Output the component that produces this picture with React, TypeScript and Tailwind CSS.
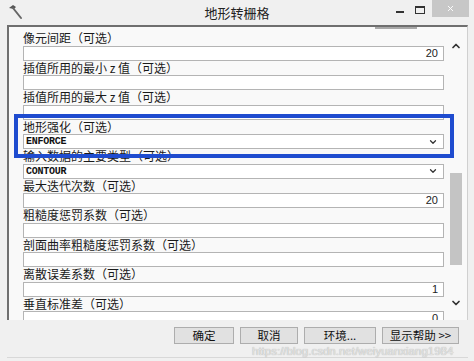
import { ChevronDown, ChevronUp, X } from 'lucide-react';

const rows: { label: string; kind: 'input' | 'select'; value?: string }[] = [
    { label: '像元间距（可选）', kind: 'input', value: '20' },
    { label: '插值所用的最小 z 值（可选）', kind: 'input' },
    { label: '插值所用的最大 z 值（可选）', kind: 'input' },
    { label: '地形强化（可选）', kind: 'select', value: 'ENFORCE' },
    { label: '输入数据的主要类型（可选）', kind: 'select', value: 'CONTOUR' },
    { label: '最大迭代次数（可选）', kind: 'input', value: '20' },
    { label: '粗糙度惩罚系数（可选）', kind: 'input' },
    { label: '剖面曲率粗糙度惩罚系数（可选）', kind: 'input' },
    { label: '离散误差系数（可选）', kind: 'input', value: '1' },
    { label: '垂直标准差（可选）', kind: 'input', value: '0' },
];

function Hammer() {
    return (
        <svg width="16" height="16" viewBox="0 0 16 16">
            <path d="M2 4 L6 1 L9 3 L7 5 Z" fill="#555" />
            <path d="M6 4 L14 14" stroke="#666" strokeWidth="2" strokeLinecap="round" />
        </svg>
    );
}

function Field({ label, kind, value }: { label: string; kind: 'input' | 'select'; value?: string }) {
    return (
        <div className="flex flex-col">
            <div className="h-[14.5px] text-[12px] leading-[14.5px] text-[#1a1a1a] whitespace-nowrap">{label}</div>
            {kind === 'input' ? (
                <div className="h-[15px] border border-[#b4b4b4] bg-white flex items-center justify-end pr-[5px] text-[11px] text-[#222] font-['Liberation_Sans',sans-serif]">
                    {value}
                </div>
            ) : (
                <div className="h-[15px] border border-[#b4b4b4] bg-white flex items-center justify-between pl-[2px] pr-[5px]">
                    <span className="text-[10px] font-bold tracking-tight text-[#111] font-['Liberation_Mono',monospace]">{value}</span>
                    <ChevronDown size={10} strokeWidth={3} className="text-[#333]" />
                </div>
            )}
        </div>
    );
}

function Btn({ children }: { children: React.ReactNode }) {
    return (
        <div className="h-[17px] border border-[#adadad] bg-[#e1e1e1] flex items-center justify-center text-[11.5px] text-[#111]">
            {children}
        </div>
    );
}

export default function App() {
    return (
        <div className="relative w-[474px] h-[361px] overflow-hidden bg-[#f0f0f0] font-['Noto_Sans_CJK_SC',sans-serif]">
            {/* title bar */}
            <div className="relative h-[25px] flex items-start">
                <div className="pl-[7px] pt-[4px]">
                    <Hammer />
                </div>
                <div className="absolute left-0 right-0 top-[3px] text-center text-[13px] text-[#222]">地形转栅格</div>
                <div className="ml-auto flex items-start mr-[5px]">
                    <div className="w-[8px] h-[2px] bg-[#333] mt-[11px] mr-[11px]" />
                    <div className="w-[10px] h-[8px] border border-[#333] border-t-2 mt-[6px] mr-[7px]" />
                    <div className="w-[37px] h-[17px] bg-[#c7c7c7] flex items-center justify-center">
                        <X size={9} strokeWidth={2.5} className="text-white" />
                    </div>
                </div>
            </div>

            {/* content panel */}
            <div className="relative ml-[7px] mr-[6px] h-[295px] border-l-2 border-t-2 border-r border-[#6f6f6f] border-r-[#d0d0d0] bg-[#f9f9f9] overflow-hidden flex">
                <div className="absolute left-[366px] top-0 w-[42px] h-[2px] bg-[#a8a8a8]" />
                <div className="pl-[14px] pt-[4px] w-[435px] flex flex-col">
                    {rows.map((r) => (
                        <Field key={r.label} {...r} />
                    ))}
                </div>
                <div className="relative flex-1 flex flex-col items-center">
                    <ChevronUp size={12} strokeWidth={3.5} className="text-[#333] mt-[13px]" />
                    <div className="mt-[121px] w-[12px] h-[92px] bg-[#c4c4c4]" />
                    <ChevronDown size={12} strokeWidth={3.5} className="text-[#333] mt-[32px]" />
                </div>
            </div>

            {/* buttons */}
            <div className="flex gap-[6px] pl-[174px] pt-[7px]">
                <div className="w-[60px]"><Btn>确定</Btn></div>
                <div className="w-[58px]"><Btn>取消</Btn></div>
                <div className="w-[72px]"><Btn>环境...</Btn></div>
                <div className="w-[77px]"><Btn>显示帮助 &gt;&gt;</Btn></div>
            </div>
            <div className="absolute left-[7px] right-[6px] bottom-[3px] h-px bg-[#d8d8d8]" />

            {/* highlight */}
            <div className="absolute left-[14px] top-[114px] w-[440px] h-[44px] border-4 border-[#1f4ccf]" />

            {/* watermark */}
            <div className="absolute left-[252px] top-[343px] text-[11.5px] text-[#e4e4e4] font-['Liberation_Sans',sans-serif] whitespace-nowrap [text-shadow:0_0_1px_rgba(0,0,0,0.35)]">
                https://blog.csdn.net/weiyuanxiang1984
            </div>
        </div>
    );
}
